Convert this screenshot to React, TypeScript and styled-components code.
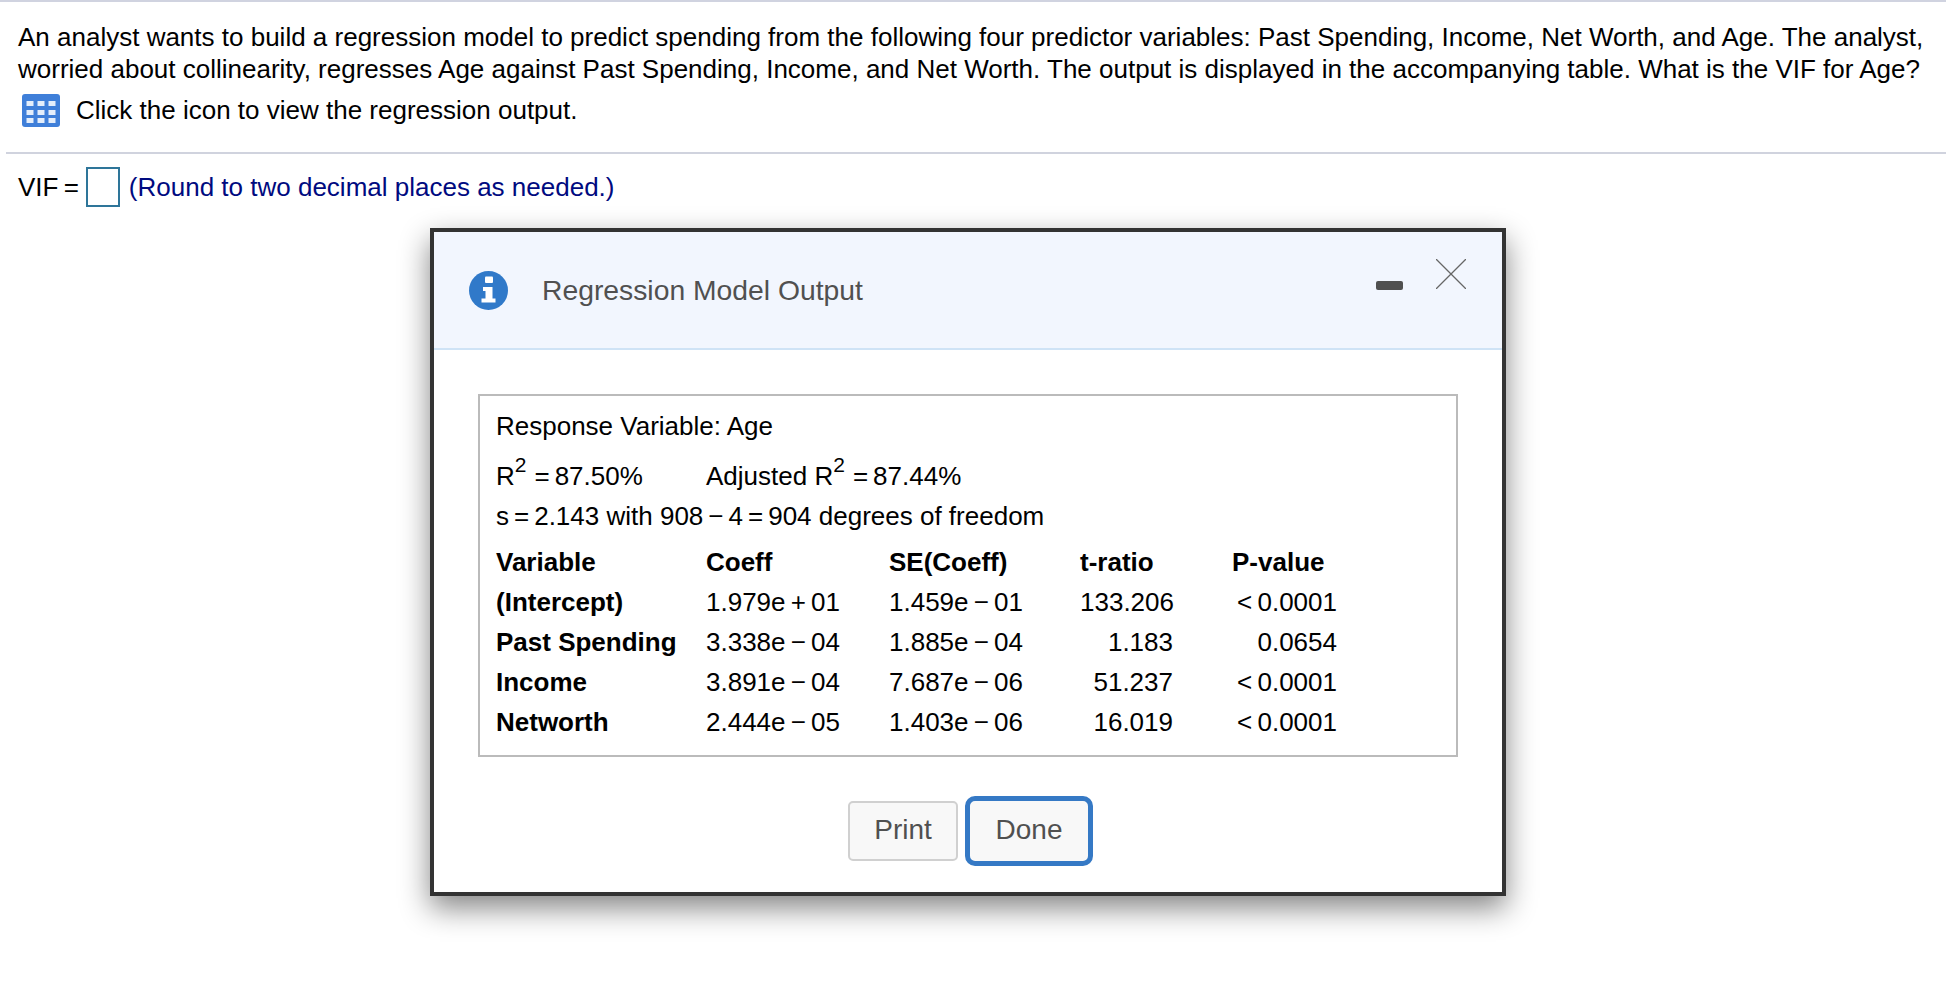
import React from "react";
import styled, { createGlobalStyle } from "styled-components";

const Global = createGlobalStyle`
  html, body { margin: 0; padding: 0; background: #fff; }
  body { font-family: "Liberation Sans", Arial, sans-serif; color: #000; }
`;

const Page = styled.div`
  position: relative;
  width: 1946px;
  height: 998px;
  overflow: hidden;
  border-top: 2px solid #d0d3e0;
  box-sizing: border-box;
`;

const Question = styled.div`
  padding: 19px 18px 0 18px;
  font-size: 26px;
  line-height: 32px;
`;

const Para = styled.p`
  margin: 0;
  white-space: nowrap;
`;

const IconLine = styled.div`
  display: flex;
  align-items: center;
  gap: 16px;
  margin: 8px 0 0 4px;
  font-size: 26px;
  line-height: 34px;
`;

const Rule = styled.div`
  height: 2px;
  margin: 25px 0 0 6px;
  background: #d0d3de;
`;

const AnswerLine = styled.div`
  display: flex;
  align-items: center;
  padding: 13px 0 0 18px;
  font-size: 26px;
  line-height: 40px;
`;

const AnswerLabel = styled.span`
  word-spacing: -2px;
`;

const AnswerInput = styled.div`
  width: 34px;
  height: 40px;
  box-sizing: border-box;
  border: 2px solid #2e7599;
  margin: 0 9px 0 7px;
`;

const Hint = styled.span`
  color: #000a80;
`;

const Dialog = styled.div`
  position: absolute;
  left: 430px;
  top: 226px;
  width: 1076px;
  height: 668px;
  box-sizing: border-box;
  border: 4px solid #333;
  background: #fff;
  box-shadow: 0 12px 28px rgba(0, 0, 0, 0.48);
  display: flex;
  flex-direction: column;
`;

const Header = styled.div`
  height: 118px;
  box-sizing: border-box;
  display: flex;
  align-items: center;
  padding: 0 36px 0 35px;
  background: #f2f6fe;
  border-bottom: 2px solid #cfe3f6;
`;

const Title = styled.div`
  flex: 1;
  margin-left: 34px;
  font-size: 28.3px;
  color: #505050;
`;

const Minimize = styled.div`
  width: 27px;
  height: 9px;
  border-radius: 2px;
  background: #505050;
  margin: 0 33px 0 0;
  transform: translateY(-5px);
`;

const CloseBtn = styled.svg`
  width: 30px;
  height: 30px;
  transform: translateY(-16px);
`;

const Content = styled.div`
  flex: 1;
  padding: 44px 44px 0 44px;
  display: flex;
  flex-direction: column;
`;

const OutputBox = styled.div`
  height: 363px;
  box-sizing: border-box;
  border: 2px solid #bbb;
  padding: 10px 0 0 16px;
  font-size: 26px;
  line-height: 40px;
`;

const Line = styled.div<{ $gap?: number }>`
  height: 40px;
  margin-top: ${(p) => p.$gap ?? 0}px;
  white-space: nowrap;
`;

const Sup = styled.sup`
  font-size: 21px;
  line-height: 0;
  vertical-align: 13px;
  margin-right: 3px;
`;

const Op = styled.span`
  margin: 0 5px;
`;

const FitPart = styled.span`
  display: inline-block;
  width: 210px;
`;

const DataGrid = styled.div`
  display: grid;
  grid-template-columns: 210px 183px 191px 93px 164px;
  grid-auto-rows: 40px;
  margin-top: 6px;
`;

const HeadCell = styled.div<{ $pad?: boolean }>`
  font-weight: 700;
  padding-left: ${(p) => (p.$pad ? 59 : 0)}px;
  white-space: nowrap;
`;

const NameCell = styled.div`
  font-weight: 700;
  white-space: nowrap;
`;

const Cell = styled.div<{ $right?: boolean }>`
  text-align: ${(p) => (p.$right ? "right" : "left")};
  white-space: nowrap;
`;

const Footer = styled.div`
  display: flex;
  justify-content: center;
  align-items: center;
  gap: 7px;
  margin-top: 39px;
  padding-left: 5px;
`;

const Btn = styled.button<{ $focus?: boolean }>`
  font-family: inherit;
  font-size: 28px;
  color: #505050;
  background: #f8f8f8;
  box-sizing: border-box;
  border: ${(p) => (p.$focus ? "5px solid #3579c5" : "2px solid #d0d0d0")};
  border-radius: ${(p) => (p.$focus ? 10 : 5)}px;
  width: ${(p) => (p.$focus ? 128 : 110)}px;
  height: ${(p) => (p.$focus ? 70 : 60)}px;
  padding: 0 0 2px 0;
`;

const rows: [string, string, string, string, string][] = [
  ["(Intercept)", "1.979e + 01", "1.459e − 01", "133.206", "< 0.0001"],
  ["Past Spending", "3.338e − 04", "1.885e − 04", "1.183", "0.0654"],
  ["Income", "3.891e − 04", "7.687e − 06", "51.237", "< 0.0001"],
  ["Networth", "2.444e − 05", "1.403e − 06", "16.019", "< 0.0001"],
];

const tight = (s: string) => s.replace(/ ([+−]) /, "\u2009$1\u2009").replace("< ", "<\u2009");

const GridIcon = () => (
  <svg width="38" height="33" viewBox="0 0 38 33">
    <rect width="38" height="33" rx="3" fill="#3f7fd9" />
    {[4.5, 15.5, 26.5].map((x) =>
      [7, 16, 24].map((y) => <rect key={`${x}-${y}`} x={x} y={y} width="7" height="5" fill="#e4eefb" />)
    )}
  </svg>
);

const InfoIcon = () => (
  <svg width="39" height="39" viewBox="0 0 39 39">
    <circle cx="19.5" cy="19.5" r="19.5" fill="#3079c9" />
    <rect x="16" y="5.5" width="8" height="6.5" rx="1" fill="#fff" />
    <path d="M14 16h9.5v11.5h3v4H12.5v-4h4v-7.5h-2.5z" fill="#fff" />
  </svg>
);

export default function App() {
  return (
    <Page>
      <Global />
      <Question>
        <Para>
          An analyst wants to build a regression model to predict spending from the following four predictor variables: Past Spending, Income, Net Worth, and Age. The analyst,
        </Para>
        <Para>
          worried about collinearity, regresses Age against Past Spending, Income, and Net Worth. The output is displayed in the accompanying table. What is the VIF for Age?
        </Para>
        <IconLine>
          <GridIcon />
          Click the icon to view the regression output.
        </IconLine>
      </Question>
      <Rule />
      <AnswerLine>
        <AnswerLabel>VIF =</AnswerLabel>
        <AnswerInput />
        <Hint>(Round to two decimal places as needed.)</Hint>
      </AnswerLine>
      <Dialog>
        <Header>
          <InfoIcon />
          <Title>Regression Model Output</Title>
          <Minimize />
          <CloseBtn viewBox="0 0 30 30">
            <path d="M0 0L30 30M30 0L0 30" stroke="#666" strokeWidth="1.3" fill="none" />
          </CloseBtn>
        </Header>
        <Content>
          <OutputBox>
            <Line>Response Variable: Age</Line>
            <Line $gap={10}>
              <FitPart>
                R<Sup>2</Sup>
                <Op>=</Op>87.50%
              </FitPart>
              Adjusted R<Sup>2</Sup>
              <Op>=</Op>87.44%
            </Line>
            <Line>
              s<Op>=</Op>2.143 with 908<Op>−</Op>4<Op>=</Op>904 degrees of freedom
            </Line>
            <DataGrid>
              <HeadCell>Variable</HeadCell>
              <HeadCell>Coeff</HeadCell>
              <HeadCell>SE(Coeff)</HeadCell>
              <HeadCell>t-ratio</HeadCell>
              <HeadCell $pad>P-value</HeadCell>
              {rows.map((r) => (
                <React.Fragment key={r[0]}>
                  <NameCell>{r[0]}</NameCell>
                  <Cell>{tight(r[1])}</Cell>
                  <Cell>{tight(r[2])}</Cell>
                  <Cell $right>{r[3]}</Cell>
                  <Cell $right>{tight(r[4])}</Cell>
                </React.Fragment>
              ))}
            </DataGrid>
          </OutputBox>
          <Footer>
            <Btn>Print</Btn>
            <Btn $focus>Done</Btn>
          </Footer>
        </Content>
      </Dialog>
    </Page>
  );
}
